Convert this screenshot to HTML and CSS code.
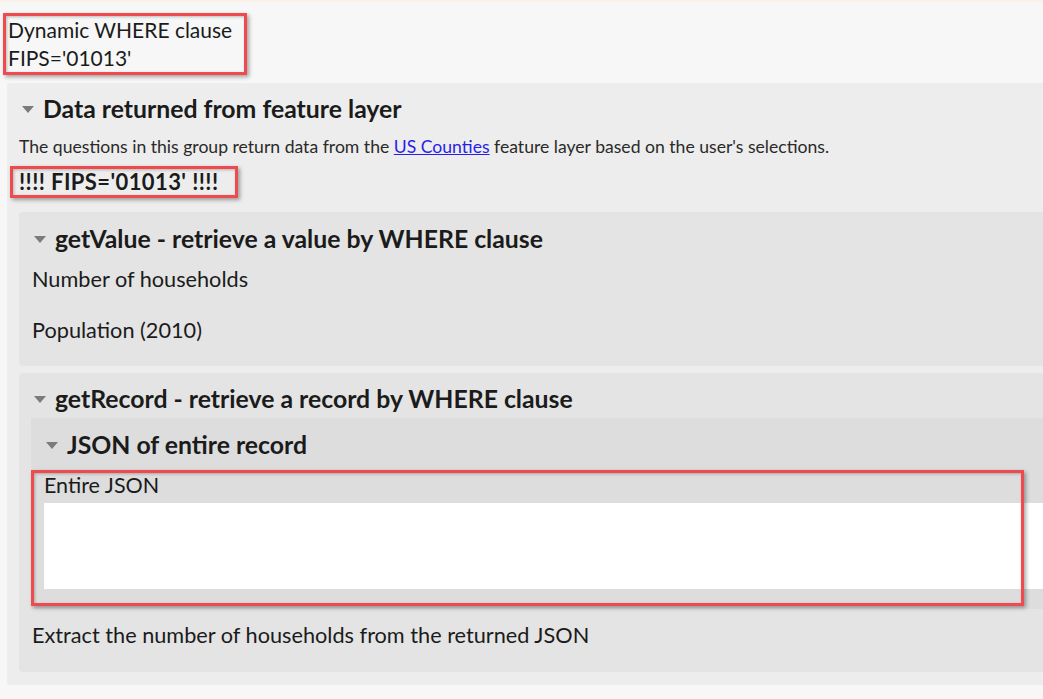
FILE: index.html
```html
<!DOCTYPE html>
<html lang="en">
<head>
<meta charset="utf-8">
<title>Dynamic WHERE clause</title>
<link rel="stylesheet" href="styles.css">
</head>
<body>
<div class="page">
  <div class="note">
    <div class="note-line">Dynamic WHERE clause</div>
    <div class="note-line">FIPS='01013'</div>
  </div>

  <section class="group">
    <div class="group-head"><span class="caret"></span><span class="group-title">Data returned from feature layer</span></div>
    <p class="desc">The questions in this group return data from the <a href="#" class="link">US Counties</a> feature layer based on the user's selections.</p>
    <div class="flag">!!!! FIPS='01013' !!!!</div>

    <section class="sub sub-first">
      <div class="sub-head"><span class="caret"></span><span class="sub-title">getValue - retrieve a value by WHERE clause</span></div>
      <div class="q">Number of households</div>
      <div class="q q-next">Population (2010)</div>
    </section>

    <section class="sub sub-second">
      <div class="sub-head"><span class="caret"></span><span class="sub-title">getRecord - retrieve a record by WHERE clause</span></div>
      <section class="inner">
        <div class="sub-head"><span class="caret"></span><span class="sub-title">JSON of entire record</span></div>
        <div class="field">
          <div class="field-label">Entire JSON</div>
          <div class="field-box"></div>
        </div>
        <div class="mark"></div>
      </section>
      <div class="q q-after">Extract the number of households from the returned JSON</div>
    </section>
  </section>
</div>
</body>
</html>
```

FILE: styles.css
```css
html, body {
  margin: 0;
  padding: 0;
}
body {
  background: #f6f7f6;
  font-family: "Lato", "Noto Sans", sans-serif;
  color: #1b1b1b;
  overflow-x: hidden;
  border-top: 2px solid #fbf1e7;
}
.page {
  padding-top: 11px;
  padding-bottom: 20px;
}
.note {
  display: inline-block;
  margin-left: 3px;
  border: 3px solid #ef4a4d;
  padding: 0 12px 0 2px;
  box-shadow: 2px 2px 4px rgba(0,0,0,0.35), inset 1px 1px 3px rgba(0,0,0,0.25);
  font-size: 21px;
  line-height: 28px;
}
.group {
  margin: 8px 0 0 7px;
  background: #ecedec;
  padding: 11px 0 13px 12px;
  border-radius: 3px 0 0 3px;
}
.group-head, .sub-head {
  display: flex;
  align-items: center;
  font-weight: 700;
  font-size: 24.8px;
  line-height: 30px;
  padding-left: 3px;
}
.caret {
  flex: none;
  width: 0;
  height: 0;
  border-left: 6.5px solid transparent;
  border-right: 6.5px solid transparent;
  border-top: 7px solid #7b7b7b;
  margin-right: 9px;
  margin-top: 1px;
}
.desc {
  margin: 12px 0 0 0;
  font-size: 17.6px;
  line-height: 22px;
  color: #2a2a2a;
}
.link {
  color: #2a1fe8;
  text-decoration: underline;
}
.flag {
  display: inline-block;
  margin: 8px 0 0 -9px;
  border: 3px solid #ef4a4d;
  padding: 0 17px 0 6px;
  font-weight: 700;
  font-size: 22px;
  letter-spacing: 0.4px;
  line-height: 26px;
  box-shadow: 2px 2px 4px rgba(0,0,0,0.35), inset 1px 1px 3px rgba(0,0,0,0.25);
}
.sub {
  background: #e3e4e3;
  border-radius: 4px 0 0 4px;
  padding: 12px 0 23px 12px;
}
.sub-first {
  margin-top: 14px;
}
.sub-second {
  margin-top: 7px;
  padding-top: 11px;
  padding-bottom: 24px;
}
.q {
  margin-top: 12px;
  font-size: 21.7px;
  line-height: 26px;
  padding-left: 1px;
}
.q-next {
  margin-top: 25px;
}
.q-after {
  margin-top: 13px;
}
.inner {
  position: relative;
  margin-top: 4px;
  background: #dcdddc;
  padding: 12px 0 20px 12px;
}
.field {
  margin-top: 12px;
  padding-left: 1px;
}
.field-label {
  font-size: 21.5px;
  line-height: 26px;
}
.field-box {
  margin-top: 5px;
  height: 86px;
  background: #ffffff;
}
.mark {
  position: absolute;
  left: 0;
  top: 52px;
  width: 987px;
  height: 130px;
  border: 3px solid #ef4a4d;
  box-shadow: 2px 2px 4px rgba(0,0,0,0.35), inset 1px 1px 3px rgba(0,0,0,0.25);
  pointer-events: none;
}
```
